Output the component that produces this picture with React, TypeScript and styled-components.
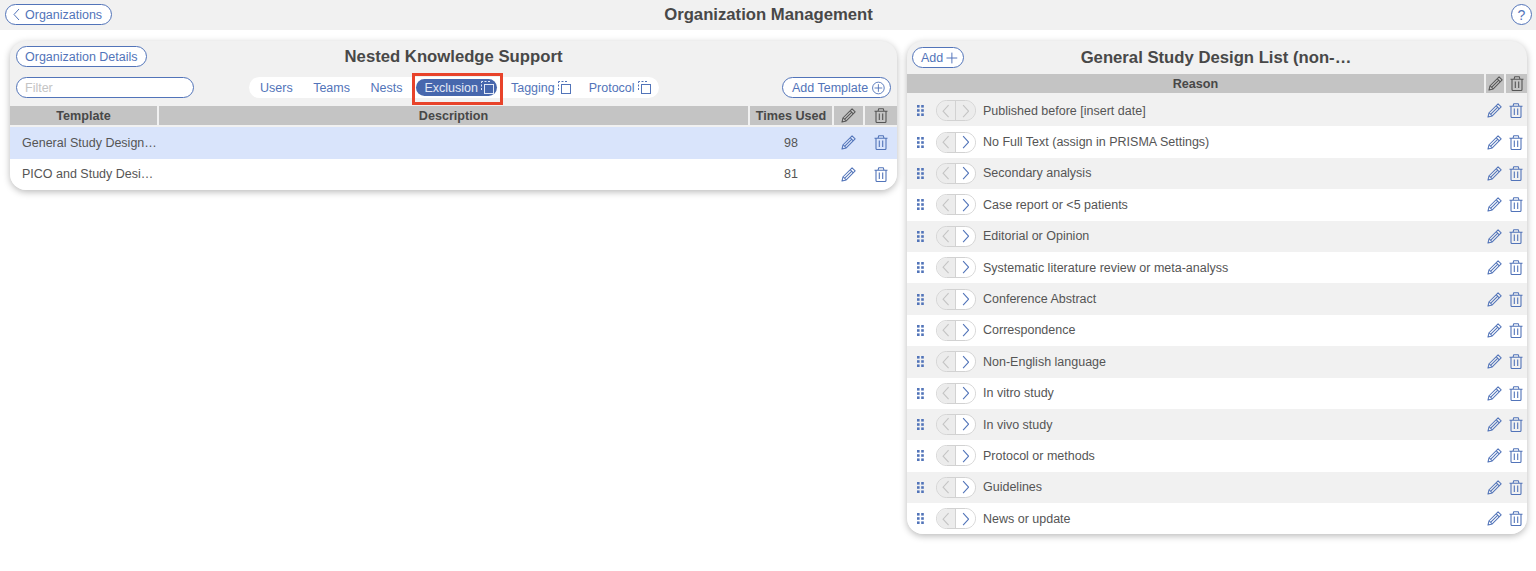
import React from "react";
import styled, { createGlobalStyle } from "styled-components";

const Global = createGlobalStyle`
  html, body { margin: 0; padding: 0; background: #fff; }
  body { font-family: "Liberation Sans", Arial, sans-serif; font-size: 12.5px; color: #555; overflow: hidden; }
  * { box-sizing: border-box; }
`;
const BLUE = "#5274b9";
const Page = styled.div`width: 1536px; height: 571px; background: #fff;`;
const TopBar = styled.header`
  height: 30px; background: #f1f1f1; display: grid; grid-template-columns: 1fr auto 1fr; align-items: center; padding: 0 4px 1px 5px;
`;
const MainTitle = styled.h1`margin: 0; font-size: 16.7px; font-weight: 700; color: #484848; line-height: 29px;`;
const TopRight = styled.div`display: flex; justify-content: flex-end;`;
const Pill = styled.button`
  height: 21px; border: 1.3px solid ${BLUE}; border-radius: 11px; background: #fff; color: ${BLUE};
  font: 12.5px "Liberation Sans", Arial, sans-serif; padding: 0 8px; display: inline-flex; align-items: center; gap: 2px; white-space: nowrap; justify-self: start;
`;
const BackPill = styled(Pill)`padding: 0 9px 0 7px; gap: 5px;`;
const AddPill = styled(Pill)`padding: 0 5px 0 8px; gap: 3px; width: 52px;`;
const HelpCircle = styled.div`
  width: 21px; height: 21px; border: 1.3px solid ${BLUE}; border-radius: 50%; color: ${BLUE}; background: #fff;
  display: flex; align-items: center; justify-content: center; font-size: 14px;
`;
const Content = styled.main`display: flex; align-items: flex-start; gap: 10px; padding: 11px 9px 0 10px;`;
const Card = styled.section<{ $w: number }>`
  width: ${p => p.$w}px; flex: none; background: #f1f1f1; border-radius: 16px; overflow: hidden;
  box-shadow: 0 2px 7px rgba(0,0,0,.28);
`;
const TitleRow = styled.div<{ $h: number; $pl: number; $pr: number }>`
  display: grid; grid-template-columns: 1fr auto 1fr; align-items: center; padding: 0 ${p => p.$pr}px 0 ${p => p.$pl}px; height: ${p => p.$h}px;
`;
const CardTitle = styled.h2`margin: 0; font-size: 16.7px; font-weight: 700; color: #484848;`;
const ToolRow = styled.div`display: flex; align-items: center; height: 21px; margin: 5px 0 8px; padding: 0 6px;`;
const Filter = styled.input`
  width: 178px; height: 21px; border: 1.3px solid ${BLUE}; border-radius: 11px; background: #fff; padding: 0 8px;
  font: 12.5px "Liberation Sans", Arial, sans-serif; outline: none;
  &::placeholder { color: #c4c4c4; }
`;
const Tabs = styled.nav`
  margin-left: 55px; width: 410px; height: 21px; background: #fff; border-radius: 11px; display: flex; align-items: center; padding: 0 0 0 11px;
`;
const Tab = styled.span<{ $active?: boolean; $ml: number }>`
  margin-left: ${p => p.$ml}px; height: 17px; padding: ${p => (p.$active ? "0 3px 0 8px" : "0")}; border-radius: 9px; display: inline-flex; align-items: center; gap: 3px;
  background: ${p => (p.$active ? "#4767ad" : "transparent")}; color: ${p => (p.$active ? "#e3e9f6" : BLUE)}; white-space: nowrap;
`;
const AddTemplate = styled(Pill)`margin-left: auto; padding: 0 5px 0 9px; width: 109px; gap: 4px;`;
const HeadGrid = styled.div`
  display: grid; grid-template-columns: 147px 589px 82px 29px 1fr; column-gap: 2px; height: 19px;
`;
const HeadCell = styled.div`
  background: #c4c4c4; color: #484848; font-weight: 700; display: flex; align-items: center; justify-content: center; font-size: 12.6px;
`;
const Row = styled.div<{ $sel?: boolean }>`
  display: grid; grid-template-columns: 147px 589px 82px 29px 1fr; column-gap: 2px; height: 31.5px; align-items: center;
  background: ${p => (p.$sel ? "#d9e4fb" : "#fff")}; margin-top: ${p => (p.$sel ? "2px" : "0")};
`;
const Ellip = styled.div`padding-left: 12px; white-space: nowrap; color: #555;`;
const Num = styled.div`text-align: center; color: #555;`;
const IconCell = styled.div`display: flex; justify-content: center; align-items: center;`;
const ReasonHead = styled.div`
  display: grid; grid-template-columns: 577px 18px 1fr; column-gap: 2px; height: 19px; margin-bottom: 2px;
`;
const ReasonRow = styled.div<{ $odd: boolean }>`
  height: 31.4px; display: flex; align-items: center; padding: 0 3px 0 10px; background: ${p => (p.$odd ? "#f1f1f1" : "#fff")};
`;
const Stepper = styled.div`
  margin-left: 12px; width: 40px; height: 21px; border: 1px solid #d2d2d2; border-radius: 11px; display: flex; overflow: hidden; flex: none;
`;
const StepL = styled.div`width: 19px; background: #ececec; border-right: 1px solid #d2d2d2; display: flex; align-items: center; justify-content: center;`;
const StepR = styled.div<{ $off: boolean }>`
  flex: 1; display: flex; align-items: center; justify-content: center; background: ${p => (p.$off ? "#ececec" : "#fff")};
`;
const Reason = styled.div`margin-left: 7px; flex: 1; color: #555; white-space: nowrap;`;
const RowIcons = styled.div`display: flex; align-items: center; gap: 7px; flex: none; padding-right: 1px;`;
const Highlight = styled.div`
  position: absolute; left: 412px; top: 73px; width: 91px; height: 32px; border: 3px solid #e8432a; pointer-events: none;
`;
const Grip = () => (
  <svg width="7" height="11" viewBox="0 0 7 11" fill={BLUE} style={{ flex: "none" }}>
    {[0, 4.2, 8.4].map(y => [0, 4.2].map(x => <rect key={`${x}-${y}`} x={x} y={y} width="2.6" height="2.6" />))}
  </svg>
);
const Chev = ({ d, c = BLUE, s = 11 }: { d: "l" | "r"; c?: string; s?: number }) => (
  <svg width={s * 0.7} height={s * 1.3} viewBox="0 0 7 13" fill="none" stroke={c} strokeWidth="1">
    <path d={d === "l" ? "M6 1 1 6.5 6 12" : "M1 1 6 6.5 1 12"} />
  </svg>
);
const Pencil = ({ c = BLUE }: { c?: string }) => (
  <svg width="15" height="15" viewBox="0 0 16 16" fill="none" stroke={c} strokeWidth="1.1" strokeLinejoin="round">
    <path d="M1 15 2.2 10.4 11.8 .9 15.1 4.2 5.6 13.8Z" />
    <path d="M2.2 10.4 5.6 13.8M9.8 2.9l3.3 3.3M4 11.9l7.3-7.3" />
  </svg>
);
const Trash = ({ c = BLUE }: { c?: string }) => (
  <svg width="14" height="15" viewBox="0 0 14 15" fill="none" stroke={c} strokeWidth="1.1">
    <path d="M.5 3.2h13M2 3.2v10.3a1 1 0 0 0 1 1h8a1 1 0 0 0 1-1V3.2M4 3.2 4.8.7h4.4L10 3.2M5.3 5.5v6.5M8.7 5.5v6.5" />
  </svg>
);
const Copy = ({ c = BLUE }: { c?: string }) => (
  <svg width="13" height="13" viewBox="0 0 13 13" fill="none" stroke={c} strokeWidth="1">
    <rect x="3.5" y="3.5" width="9" height="9" />
    <path d="M.5 .5h1.5M3.5 .5h2M7 .5h2M.5 .5v1.5M.5 3.5v2M.5 7v2" />
  </svg>
);
const PlusCircle = () => (
  <svg width="14" height="14" viewBox="0 0 14 14" fill="none" stroke={BLUE} strokeWidth="1">
    <circle cx="7" cy="7" r="6.4" /><path d="M7 2.8v8.4M2.8 7h8.4" />
  </svg>
);
const Plus = () => (
  <svg width="12" height="12" viewBox="0 0 12 12" fill="none" stroke={BLUE} strokeWidth="1"><path d="M6 .5v11M.5 6h11" /></svg>
);
const reasons = [
  "Published before [insert date]", "No Full Text (assign in PRISMA Settings)", "Secondary analysis", "Case report or <5 patients",
  "Editorial or Opinion", "Systematic literature review or meta-analyss", "Conference Abstract", "Correspondence",
  "Non-English language", "In vitro study", "In vivo study", "Protocol or methods", "Guidelines", "News or update",
];
const OFF = "#c4c4c4";
const HEADICON = "#555";
export default function App() {
  return (
    <Page>
      <Global />
      <TopBar>
        <BackPill><Chev d="l" s={10} />Organizations</BackPill>
        <MainTitle>Organization Management</MainTitle>
        <TopRight><HelpCircle>?</HelpCircle></TopRight>
      </TopBar>
      <Content>
        <Card $w={887}>
          <TitleRow $h={31} $pl={6} $pr={6}>
            <Pill>Organization Details</Pill>
            <CardTitle>Nested Knowledge Support</CardTitle>
            <span />
          </TitleRow>
          <ToolRow>
            <Filter placeholder="Filter" />
            <Tabs>
              <Tab $ml={0}>Users</Tab>
              <Tab $ml={20.5}>Teams</Tab>
              <Tab $ml={20.5}>Nests</Tab>
              <Tab $ml={14} $active>Exclusion<Copy c="#e3e9f6" /></Tab>
              <Tab $ml={14}>Tagging<Copy /></Tab>
              <Tab $ml={18}>Protocol<Copy /></Tab>
            </Tabs>
            <AddTemplate>Add Template<PlusCircle /></AddTemplate>
          </ToolRow>
          <HeadGrid>
            <HeadCell>Template</HeadCell>
            <HeadCell>Description</HeadCell>
            <HeadCell>Times Used</HeadCell>
            <HeadCell><Pencil c={HEADICON} /></HeadCell>
            <HeadCell><Trash c={HEADICON} /></HeadCell>
          </HeadGrid>
          <Row $sel>
            <Ellip>General Study Design…</Ellip><span /><Num>98</Num>
            <IconCell><Pencil /></IconCell><IconCell><Trash /></IconCell>
          </Row>
          <Row>
            <Ellip>PICO and Study Desi…</Ellip><span /><Num>81</Num>
            <IconCell><Pencil /></IconCell><IconCell><Trash /></IconCell>
          </Row>
        </Card>
        <Card $w={620}>
          <TitleRow $h={33} $pl={5} $pr={7}>
            <AddPill>Add<Plus /></AddPill>
            <CardTitle>General Study Design List (non-…</CardTitle>
            <span />
          </TitleRow>
          <ReasonHead>
            <HeadCell>Reason</HeadCell>
            <HeadCell><Pencil c={HEADICON} /></HeadCell>
            <HeadCell><Trash c={HEADICON} /></HeadCell>
          </ReasonHead>
          {reasons.map((r, i) => (
            <ReasonRow key={r} $odd={i % 2 === 0}>
              <Grip />
              <Stepper>
                <StepL><Chev d="l" c={OFF} /></StepL>
                <StepR $off={i === 0}><Chev d="r" c={i === 0 ? OFF : BLUE} /></StepR>
              </Stepper>
              <Reason>{r}</Reason>
              <RowIcons><Pencil /><Trash /></RowIcons>
            </ReasonRow>
          ))}
        </Card>
      </Content>
      <Highlight />
    </Page>
  );
}
